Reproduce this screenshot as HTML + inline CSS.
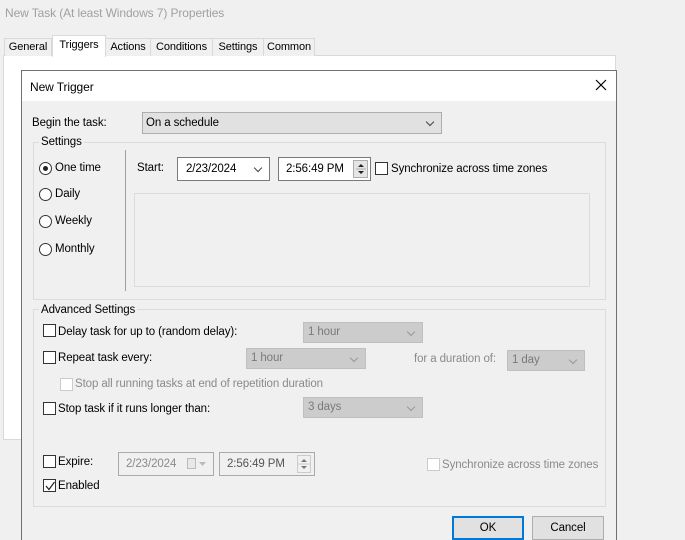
<!DOCTYPE html>
<html style="width:685px;height:540px;overflow:hidden"><head><style>
*{box-sizing:border-box;margin:0;padding:0}
body{width:685px;height:540px;overflow:hidden;background:#f0f0f0;font-family:"Liberation Sans",sans-serif;font-size:11.5px;letter-spacing:-0.1px;color:#000;position:relative}
.a{position:absolute;white-space:nowrap}
.t{position:absolute;white-space:nowrap;line-height:14px}
.g{color:#8a8a8a}
.tab{position:absolute;top:38px;height:18px;border:1px solid #d9d9d9;border-bottom:none;background:#f0f0f0;text-align:center;line-height:16px;font-size:11px}
.cb{position:absolute;width:13px;height:13px;border:1px solid #333;background:#fff}
.cbd{border-color:#ccc}
.rd{position:absolute;width:13px;height:13px;border:1px solid #333;border-radius:50%;background:#fff}
.combo{position:absolute;border:1px solid #bfbfbf;background:#cccccc;color:#7a7a7a;padding-left:4px;line-height:19px}
.chev{position:absolute;right:8px;top:6px;width:6px;height:6px;border-right:1px solid #999;border-bottom:1px solid #999;transform:rotate(45deg)}
.box{position:absolute;border:1px solid #dcdcdc}
.lbl{position:absolute;background:#f0f0f0;padding:0 2px;line-height:14px}
.btn{position:absolute;top:516px;height:24px;width:72px;background:#e1e1e1;border:1px solid #adadad;text-align:center;line-height:22px}
</style></head><body>
<div class="t" style="left:5px;top:6px;color:#a0a0a0;font-size:12px">New Task (At least Windows 7) Properties</div>

<div class="a" style="left:3px;top:55px;width:613px;height:385px;background:#fff;border:1px solid #d9d9d9"></div>
<div class="tab" style="left:4px;width:48px">General</div>
<div class="tab" style="left:52px;width:54px;top:35px;height:22px;background:#fff;line-height:18px;z-index:2">Triggers</div>
<div class="tab" style="left:105px;width:46px">Actions</div>
<div class="tab" style="left:150px;width:63px">Conditions</div>
<div class="tab" style="left:212px;width:52px">Settings</div>
<div class="tab" style="left:263px;width:52px">Common</div>

<div class="a" style="left:21px;top:70px;width:596px;height:470px;border:1px solid #707070;border-bottom:none;background:#f0f0f0;z-index:3">
 <div class="a" style="left:0;top:0;width:594px;height:30px;background:#fff"></div>
 <div class="t" style="left:8px;top:9px;font-size:12px">New Trigger</div>
 <svg class="a" style="left:573px;top:8px" width="12" height="12"><path d="M1 1L11 11M11 1L1 11" stroke="#000" stroke-width="1.2"/></svg>
</div>
<div style="position:absolute;left:0;top:0;width:685px;height:540px;z-index:4">
<div class="t" style="left:32px;top:116px">Begin the task:</div>
<div class="a" style="left:142px;top:112px;width:300px;height:22px;background:#e1e1e1;border:1px solid #adadad;line-height:20px;padding-left:3px">On a schedule<div class="chev" style="border-color:#444"></div></div>

<div class="box" style="left:33px;top:142px;width:573px;height:158px"></div>
<div class="lbl" style="left:39px;top:135px">Settings</div>
<div class="a" style="left:125px;top:150px;width:1px;height:141px;background:#a0a0a0"></div>
<div class="rd" style="left:39px;top:162px"><div class="a" style="left:3px;top:3px;width:5px;height:5px;border-radius:50%;background:#222"></div></div>
<div class="t" style="left:55px;top:161px">One time</div>
<div class="rd" style="left:39px;top:188px"></div><div class="t" style="left:55px;top:187px">Daily</div>
<div class="rd" style="left:39px;top:215px"></div><div class="t" style="left:55px;top:214px">Weekly</div>
<div class="rd" style="left:39px;top:243px"></div><div class="t" style="left:55px;top:242px">Monthly</div>

<div class="t" style="left:137px;top:161px">Start:</div>
<div class="a" style="left:177px;top:157px;width:93px;height:24px;background:#fff;border:1px solid #7a7a7a;padding-left:8px;line-height:22px">2/23/2024<div class="chev" style="border-color:#444;top:7px"></div></div>
<div class="a" style="left:278px;top:157px;width:93px;height:24px;background:#fff;border:1px solid #7a7a7a;padding-left:7px;line-height:22px">2:56:49 PM
 <div class="a" style="left:74px;top:2px;width:15px;height:18px;border:1px solid #adadad;background:#e5e5e5"></div>
 <svg class="a" style="left:76px;top:3px" width="12" height="16"><path d="M3 6L6 3L9 6Z M3 10L6 13L9 10Z" fill="#222"/><path d="M1 8H11" stroke="#adadad"/></svg>
</div>
<div class="cb" style="left:375px;top:162px"></div>
<div class="t" style="left:391px;top:162px">Synchronize across time zones</div>
<div class="box" style="left:134px;top:193px;width:456px;height:94px"></div>

<div class="box" style="left:33px;top:309px;width:573px;height:198px"></div>
<div class="lbl" style="left:39px;top:303px">Advanced Settings</div>

<div class="cb" style="left:43px;top:324px"></div><div class="t" style="left:58px;top:325px">Delay task for up to (random delay):</div>
<div class="combo" style="left:303px;top:322px;width:120px;height:21px">1 hour<div class="chev"></div></div>

<div class="cb" style="left:43px;top:351px"></div><div class="t" style="left:58px;top:351px">Repeat task every:</div>
<div class="combo" style="left:246px;top:348px;width:120px;height:21px">1 hour<div class="chev"></div></div>
<div class="t g" style="left:414px;top:352px">for a duration of:</div>
<div class="combo" style="left:507px;top:350px;width:78px;height:21px">1 day<div class="chev"></div></div>

<div class="cb cbd" style="left:60px;top:378px"></div><div class="t g" style="left:75px;top:377px">Stop all running tasks at end of repetition duration</div>

<div class="cb" style="left:43px;top:402px"></div><div class="t" style="left:58px;top:402px">Stop task if it runs longer than:</div>
<div class="combo" style="left:303px;top:397px;width:120px;height:21px">3 days<div class="chev"></div></div>

<div class="cb" style="left:43px;top:455px"></div><div class="t" style="left:58px;top:455px">Expire:</div>
<div class="a g" style="left:118px;top:452px;width:96px;height:24px;border:1px solid #aaa;line-height:22px;padding-left:7px">2/23/2024
 <div class="a" style="left:68px;top:5px;width:9px;height:11px;border:1px solid #bbb;background:#e8e8e8"></div>
 <svg class="a" style="left:80px;top:9px" width="7" height="5"><path d="M0 0H7L3.5 4Z" fill="#bbb"/></svg>
</div>
<div class="a g" style="left:219px;top:452px;width:96px;height:24px;border:1px solid #aaa;line-height:22px;padding-left:7px;color:#555">2:56:49 PM
 <svg class="a" style="left:77px;top:2px" width="14" height="18"><rect x="0.5" y="0.5" width="13" height="17" fill="#f0f0f0" stroke="#ccc"/><path d="M4 7L7 4L10 7Z M4 11L7 14L10 11Z" fill="#777"/><path d="M1 9H13" stroke="#ccc"/></svg>
</div>
<div class="cb cbd" style="left:427px;top:458px"></div><div class="t g" style="left:442px;top:458px">Synchronize across time zones</div>

<div class="cb" style="left:43px;top:479px"><svg class="a" style="left:1px;top:1px" width="10" height="10"><path d="M1 5L4 8.5L9.5 1" stroke="#222" fill="none" stroke-width="1.2"/></svg></div>
<div class="t" style="left:58px;top:479px">Enabled</div>

<div class="btn" style="left:452px;border:2px solid #0078d7;line-height:20px">OK</div>
<div class="btn" style="left:532px">Cancel</div>
</div>
</body></html>
